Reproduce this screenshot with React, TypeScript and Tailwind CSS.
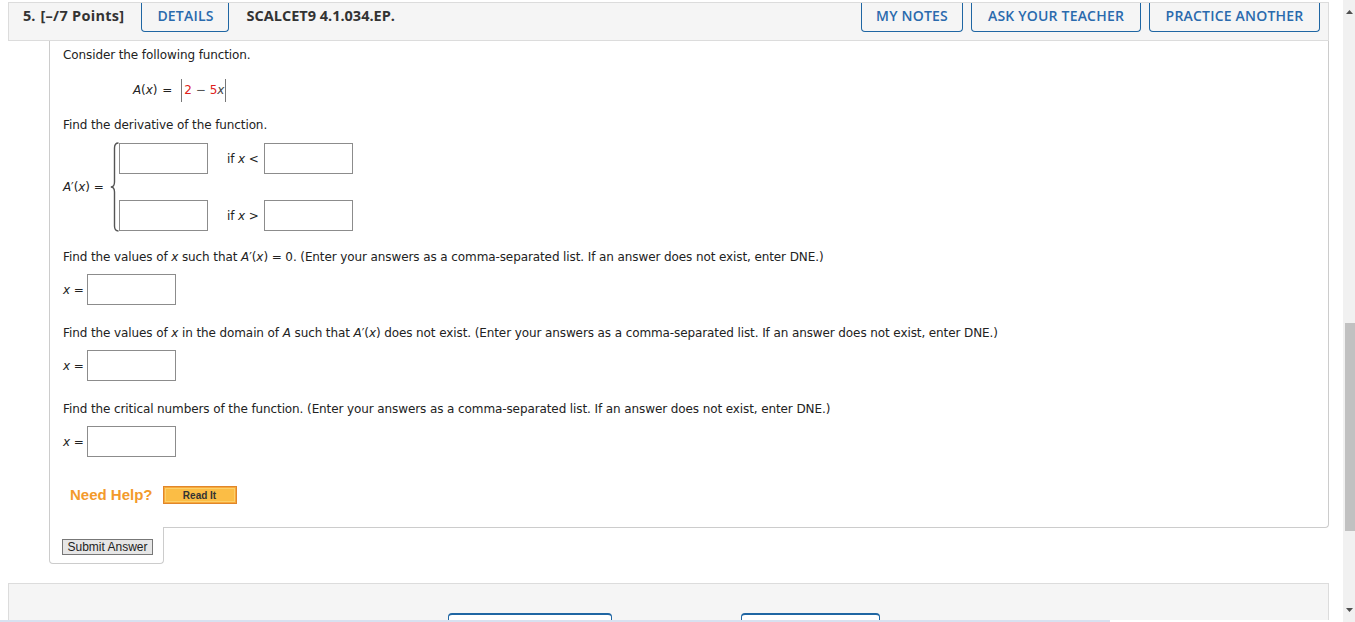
import React from 'react';

const body = "font-['DejaVu_Sans',sans-serif] text-[12px] tracking-[-0.1px] text-[#222]";

const TopButton = ({ label, width }: { label: string; width: string }) => (
  <div
    className={`${width} h-[29px] pb-[3px] flex items-center justify-center border-x border-b border-[#1f66a3] rounded-b-[4px] text-[14px] font-semibold text-[#2a6aad] tracking-[0.2px]`}
  >
    {label}
  </div>
);

const Field = () => <div className="w-[89px] h-[31px] border border-[#8c8c8c] bg-white shrink-0" />;

const X = () => <i>x</i>;

const Brace = () => (
  <svg width="9" height="90" viewBox="0 0 9 90" className="shrink-0">
    <path
      d="M8.5 1 Q4.5 1 4.5 6 L4.5 40 Q4.5 45 0.8 45 Q4.5 45 4.5 50 L4.5 84 Q4.5 89 8.5 89"
      fill="none"
      stroke="#555"
      strokeWidth="1.4"
    />
  </svg>
);

const AnswerRow = () => (
  <div className="flex items-center h-[31px] mt-[9px]">
    <span className="w-[24px]">
      <X /> =
    </span>
    <Field />
  </div>
);

const Question = () => (
  <div className={`${body} pl-[13px] pt-[6px] pb-[23px]`}>
    <p className="leading-[16px]">Consider the following function.</p>

    <div className="flex items-center h-[24px] mt-[15px] pl-[70px]">
      <span>
        <i>A</i>(<X />)
      </span>
      <span className="ml-[5px]">=</span>
      <span className="ml-[9px] h-[23px] border-l border-[#777]" />
      <span className="ml-[2px] text-[#e0201b]">2</span>
      <span className="mx-[4px] text-[#555]">−</span>
      <span className="text-[#e0201b]">5</span>
      <span className="text-[#444]">
        <X />
      </span>
      <span className="ml-[1px] h-[23px] border-l border-[#777]" />
    </div>

    <p className="leading-[16px] mt-[15px]">Find the derivative of the function.</p>

    <div className="flex items-center mt-[9px] h-[90px]">
      <span className="w-[47px]">
        <i>A</i>′(<X />) =
      </span>
      <Brace />
      <div className="flex flex-col gap-[26px]">
        <div className="flex items-center">
          <Field />
          <span className="w-[56px] pl-[19px]">
            if <X /> &lt;
          </span>
          <Field />
        </div>
        <div className="flex items-center">
          <Field />
          <span className="w-[56px] pl-[19px]">
            if <X /> &gt;
          </span>
          <Field />
        </div>
      </div>
    </div>

    <p className="leading-[16px] mt-[17px]">
      Find the values of <X /> such that <i>A</i>′(<X />) = 0. (Enter your answers as a comma-separated list. If an
      answer does not exist, enter DNE.)
    </p>
    <AnswerRow />

    <p className="leading-[16px] mt-[20px]">
      Find the values of <X /> in the domain of <i>A</i> such that <i>A</i>′(<X />) does not exist. (Enter your answers
      as a comma-separated list. If an answer does not exist, enter DNE.)
    </p>
    <AnswerRow />

    <p className="leading-[16px] mt-[20px]">
      Find the critical numbers of the function. (Enter your answers as a comma-separated list. If an answer does not
      exist, enter DNE.)
    </p>
    <AnswerRow />

    <div className="flex items-center mt-[29px] h-[18px] pl-[7px] tracking-normal font-['Liberation_Sans',Arial,sans-serif]">
      <span className="text-[15px] font-bold text-[#f39a2b]">Need Help?</span>
      <div className="ml-[10px] w-[74px] h-[18px] border border-[#e0862a] bg-[#f7a93a] p-px">
        <div className="h-full flex items-center justify-center border border-[#fcd06a] bg-[#fbbd45] text-[10px] font-bold text-[#333]">
          Read It
        </div>
      </div>
    </div>
  </div>
);

export default function App() {
  return (
    <div className="flex h-[622px] overflow-hidden bg-white font-['Open_Sans',sans-serif]">
      <div className="flex-1 min-w-0 flex flex-col">
        {/* question header */}
        <div className="shrink-0 mt-[2px] ml-2 mr-[14px] h-[39px] border border-[#dcdcdc] bg-[#f5f5f5] flex items-start pl-[14px] pr-2">
          <div className="h-[28px] pb-[3px] flex items-center gap-[5px] text-[14.5px] font-bold text-[#333]">
            <span>5.</span>
            <span className="tracking-[0.3px]">[–/7 Points]</span>
          </div>
          <div className="ml-[17px]">
            <TopButton label="DETAILS" width="w-[88px]" />
          </div>
          <div className="h-[28px] pb-[3px] flex items-center ml-[17px] text-[14.5px] font-bold text-[#333]">
            SCALCET9 4.1.034.EP.
          </div>
          <div className="ml-auto flex gap-[8px]">
            <TopButton label="MY NOTES" width="w-[102px]" />
            <TopButton label="ASK YOUR TEACHER" width="w-[170px]" />
            <TopButton label="PRACTICE ANOTHER" width="w-[171px]" />
          </div>
        </div>

        {/* question body */}
        <div className="shrink-0 ml-[49px] mr-[14px] border-x border-b border-[#cccccc] rounded-br-[4px]">
          <Question />
        </div>
        <div className="shrink-0 ml-[49px] -mt-px w-[115px] h-[37px] bg-white border-x border-b border-[#cccccc] rounded-b-[4px] pt-[12px] pl-[12px] flex items-start">
          <button className="w-[91px] h-[16px] border border-[#777] bg-[#e6e6e6] text-[12px] leading-[14px] text-[#222] font-['Liberation_Sans',Arial,sans-serif]">
            Submit Answer
          </button>
        </div>

        {/* next question */}
        <div className="mt-[19px] ml-2 mr-[14px] flex-1 min-h-0 border-x border-t border-[#dcdcdc] bg-[#f5f5f5] pt-[29px] flex items-start">
          <div className="ml-[439px] w-[164px] h-[20px] border-x border-t-2 border-[#1f66a3] rounded-t-[4px] bg-white" />
          <div className="ml-[129px] w-[139px] h-[20px] border-x border-t-2 border-[#1f66a3] rounded-t-[4px] bg-white" />
        </div>
        <div className="shrink-0 h-[2px] w-[1110px] bg-[#d8e1f0]" />
      </div>

      {/* scrollbar */}
      <div className="w-[12px] bg-[#f1f1f1] flex flex-col">
        <div className="h-[17px] flex items-center justify-center pt-[6px]">
          <svg width="7" height="4" viewBox="0 0 7 4">
            <path d="M0 4 L3.5 0 L7 4 Z" fill="#505050" />
          </svg>
        </div>
        <div className="mt-[306px] ml-[2px] w-[10px] h-[208px] bg-[#c1c1c1]" />
        <div className="flex-1" />
        <div className="h-[17px] flex items-start justify-center pt-[3px]">
          <svg width="7" height="4" viewBox="0 0 7 4">
            <path d="M0 0 L7 0 L3.5 4 Z" fill="#505050" />
          </svg>
        </div>
      </div>
    </div>
  );
}
